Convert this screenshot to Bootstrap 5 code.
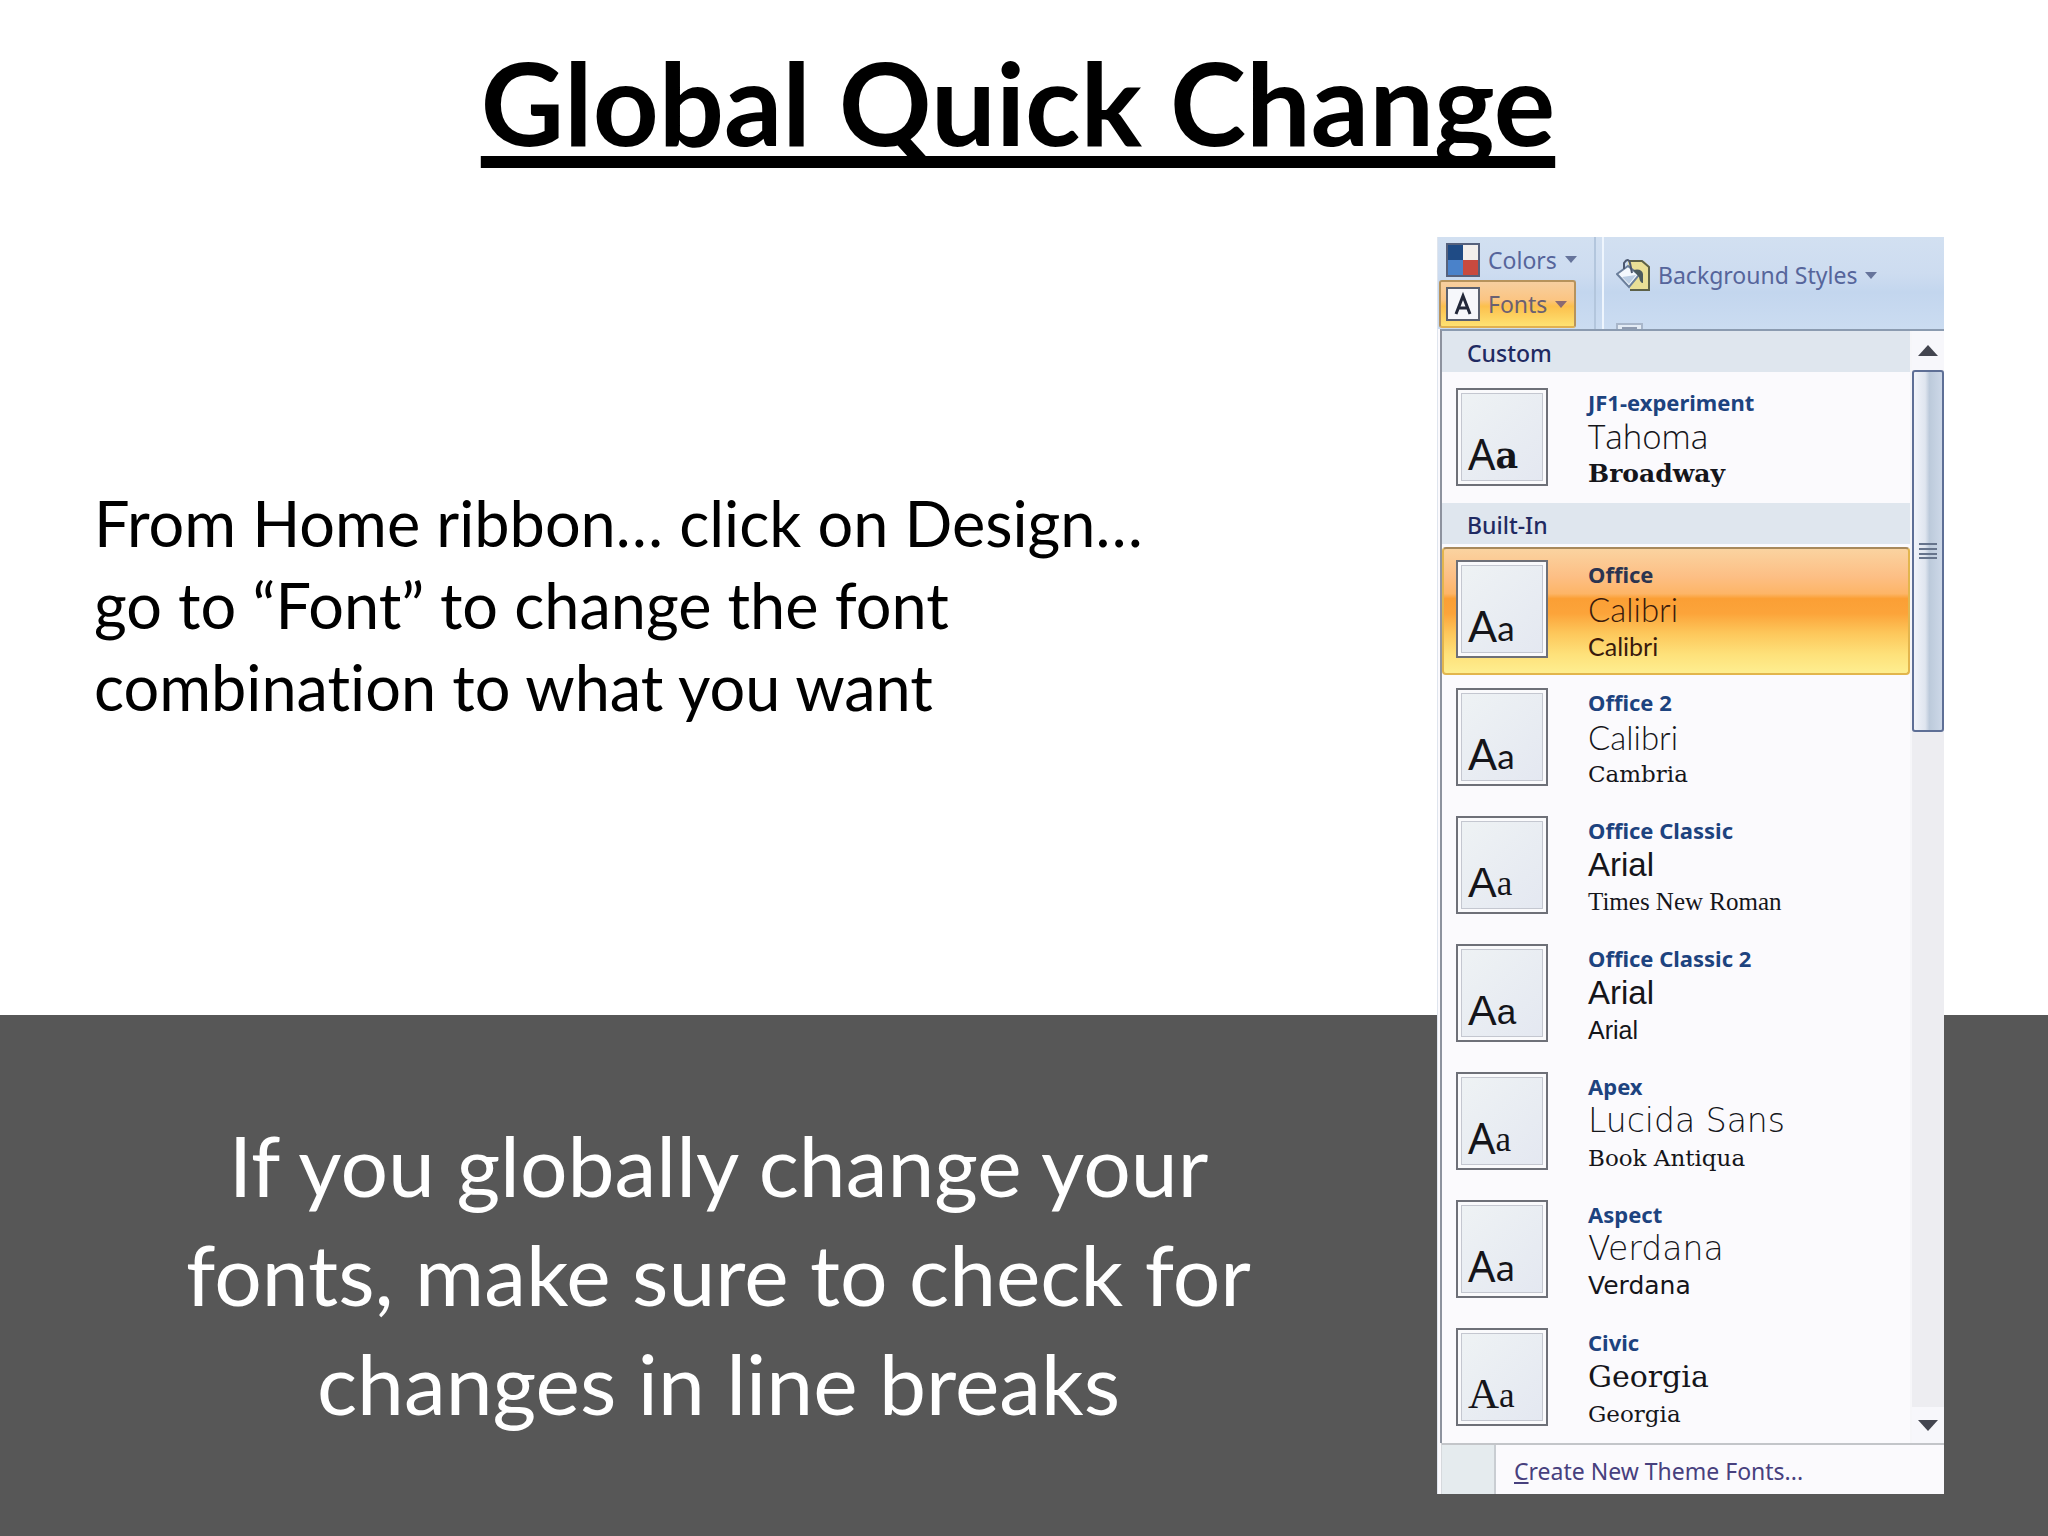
<!DOCTYPE html>
<html lang="en">
<head>
<meta charset="utf-8">
<meta name="viewport" content="width=device-width, initial-scale=1">
<title>Global Quick Change</title>
<link href="https://cdn.jsdelivr.net/npm/bootstrap@5.3.0/dist/css/bootstrap.min.css" rel="stylesheet">
<style>
  body { font-family: Lato, "Liberation Sans", sans-serif; color: #000; background: #fff; font-variant-ligatures: none; }
  .slide { display: grid; min-height: 100vh; grid-template-columns: minmax(0, 1fr) auto; grid-template-rows: 237px 1fr auto; }
  .slide-head { grid-area: 1 / 1 / 2 / 3; padding: 33px 12px 0 0; }
  .slide-title { font-size: 115px; line-height: 136px; font-weight: 700; text-decoration: underline; text-decoration-thickness: 12px; text-underline-offset: 10px; text-decoration-skip-ink: none; }
  .steps { grid-area: 2 / 1 / 3 / 2; padding: 245px 240px 0 94px; font-size: 63px; line-height: 82px; }
  .band { grid-area: 3 / 1 / 4 / 3; background: #575757; min-height: 521px; }
  .notice { grid-area: 3 / 1 / 4 / 2; padding: 95px 160px 0; color: #fff; font-size: 84px; line-height: 109px; }
  .picker { grid-area: 2 / 2 / 4 / 3; width: 507px; margin: 0 104px 42px 0; font-family: "Noto Sans", sans-serif; background: #fbfafd; border-left: 1px solid #dfe5ee; }

  .ribbon { height: 92px; background: linear-gradient(#d2e0f1, #cddcf0 40%, #c3d6ee 60%, #cbdcf1); font-size: 23px; line-height: 28px; color: #56659b; }
  .ribbon-left { width: 158px; border-right: 2px solid #b3c6dd; padding: 2px 0 0 1px; }
  .ribbon-right { border-left: 2px solid #eef5fd; margin-left: 6px; padding: 22px 0 0 12px; }
  .tool { border: 0; background: none; color: inherit; padding: 0; }
  .tool-colors { height: 41px; padding-left: 7px; }
  .tool-fonts { width: 137px; height: 48px; padding-left: 5px; border: 2px solid #b7935b; border-bottom-color: #e0b050; border-radius: 3px; background: linear-gradient(#f7cf9f, #fbc583 40%, #fcc04d 55%, #fee272); color: #6a6072; }
  .tool svg { display: block; }

  .menu-list { border-top: 2px solid #8b9bb0; border-left: 2px solid #8d929e; margin-left: 2px; }
  .group-head { height: 44px; border-bottom: 3px solid #fbfafd; background: #dfe6ee; color: #1f2a62; font-size: 23px; line-height: 44px; font-weight: 500; padding-left: 25px; margin: 0; }
  .font-item { width: 100%; height: 128px; border: 2px solid transparent; border-radius: 4px; background: none; padding: 11px 0 0 12px; gap: 40px; color: #15151a; }
  .font-item.chosen { border-color: #e2b54d; border-top-color: #a8895b; background: linear-gradient(#fad3a0, #fdbf85 22%, #fdb567 36%, #fb9f35 40%, #fca43a 52%, #fdc75b 68%, #fee17a 85%, #feee90); color: #3a1a0c; }
  .font-item.chosen .item-name { color: #2b3450; }
  .thumb { width: 92px; height: 98px; border: 2px solid #6e7078; padding: 3px; background: #fafafc; }
  .thumb-in { height: 100%; border: 1px solid #c4c7d0; background: linear-gradient(135deg, #eef2f4, #e4e8f1); padding: 0 0 5px 6px; color: #15151a; }
  .big-a { font-size: 43px; line-height: 42px; }
  .small-a { font-size: 35px; line-height: 39px; }
  .item-name { font-size: 22px; line-height: 29px; font-weight: 700; color: #1d437f; }
  .head-font { font-size: 33px; line-height: 40px; font-weight: 300; }
  .body-font { font-size: 25px; line-height: 34px; }
  .f-sans { font-family: "Liberation Sans", sans-serif; }
  .f-serif { font-family: "Liberation Serif", serif; }
  .f-lato { font-family: Lato, sans-serif; }
  .f-noto { font-family: "Noto Sans", sans-serif; }
  .f-open { font-family: "Open Sans", sans-serif; }
  .f-wide { font-family: "DejaVu Sans", sans-serif; }
  .f-slab { font-family: "DejaVu Serif", serif; }
  .f-heavy { font-family: "DejaVu Serif", serif; font-weight: 700; }
  .t-23 { font-size: 23px; }
  .t-30 { font-size: 30px; }

  .scroller { width: 34px; background: #ededf1; border-left: 2px solid #f6f6f9; }
  .scroll-btn { border: 0; padding: 0; height: 39px; background: #f7f7fb; }
  .scroll-btn.down { height: 36px; }
  .scroll-thumb { height: 362px; border: 2px solid #5e6f96; border-radius: 3px; background: linear-gradient(90deg, #f1f4fa, #dfe5ef 40%, #bccadb 55%, #cdd8e8); }
  .menu-foot { height: 51px; margin-left: 3px; border-top: 2px solid #c3c5c9; border-left: 1px solid #d6d9dd; }
  .foot-gutter { width: 54px; background: #e5ebee; border-right: 2px solid #c9cdd2; }
  .foot-link { border: 0; background: none; font-size: 23px; line-height: 28px; color: #47407e; padding: 2px 0 0 18px; }
</style>
</head>
<body>
<main class="slide">
  <header class="slide-head text-center">
    <h1 class="slide-title mb-0">Global Quick Change</h1>
  </header>

  <p class="steps mb-0">From Home ribbon… click on Design…<br>go to “Font” to change the font<br>combination to what you want</p>

  <div class="band"></div>
  <p class="notice mb-0 text-center">If you globally change your<br>fonts, make sure to check for<br>changes in line breaks</p>

  <section class="picker d-flex flex-column" aria-label="Theme fonts">
    <div class="ribbon d-flex">
      <div class="ribbon-left d-flex flex-column align-items-start">
        <button type="button" class="tool tool-colors d-flex align-items-center gap-2">
          <svg width="34" height="34" viewBox="0 0 34 34"><path fill="#1f4b85" d="M0 0h17v17H0z"/><path fill="#f3efec" d="M17 0h17v17H17z"/><path fill="#4a82ca" d="M0 17h17v17H0z"/><path fill="#c84a3f" d="M17 17h17v17H17z"/><path fill="none" stroke="#56617c" stroke-width="2" d="M1 1h32v32H1z"/></svg>
          <span>Colors</span>
          <svg width="12" height="7" viewBox="0 0 12 7"><path fill="#66749b" d="M0 0h12L6 7z"/></svg>
        </button>
        <button type="button" class="tool tool-fonts d-flex align-items-center gap-2">
          <svg width="34" height="34" viewBox="0 0 34 34"><path fill="#f6f7fb" stroke="#5b6170" stroke-width="2" d="M1 1h32v32H1z"/><path fill="none" stroke="#22283a" stroke-width="3" d="M10 27L17 9l7 18M13 21h8"/></svg>
          <span>Fonts</span>
          <svg width="12" height="7" viewBox="0 0 12 7"><path fill="#8a6a72" d="M0 0h12L6 7z"/></svg>
        </button>
      </div>
      <div class="ribbon-right flex-grow-1 d-flex flex-column justify-content-between align-items-start">
        <button type="button" class="tool d-flex align-items-center gap-2">
          <svg width="34" height="32" viewBox="0 0 34 32"><path fill="#e9df96" d="M12 2h16l5 5v24H14z"/><path fill="none" stroke="#5c6149" stroke-width="2" d="M13 2h13l7 6v23H14"/><path fill="#f3f8fd" stroke="#6b7f9b" stroke-width="2" d="M1 15L12 7l11 9-10 12z"/><path fill="#b9cce2" d="M6 18l14-2-7 9z"/><path fill="none" stroke="#4c5870" stroke-width="2" d="M8 10V4q4-6 6 0l2 10"/><path fill="#4b5a5e" d="M17 11q9-2 10 4v9q-3 0-4-6z"/></svg>
          <span>Background Styles</span>
          <svg width="12" height="7" viewBox="0 0 12 7"><path fill="#66749b" d="M0 0h12L6 7z"/></svg>
        </button>
        <svg width="28" height="6" viewBox="0 0 28 6"><path fill="#e3ebf4" stroke="#a8b6ca" stroke-width="2" d="M1 7V1h25v6"/><path stroke="#8f9bb0" stroke-width="2" d="M6 5h15"/></svg>
      </div>
    </div>

    <div class="menu-list d-flex">
      <div class="flex-grow-1">
        <h2 class="group-head">Custom</h2>
        <button type="button" class="font-item d-flex text-start">
          <span class="thumb d-block"><span class="thumb-in d-flex align-items-end"><span class="big-a f-noto">A</span><span class="small-a f-heavy">a</span></span></span>
          <span class="d-flex flex-column"><span class="item-name">JF1-experiment</span><span class="head-font f-open">Tahoma</span><span class="body-font f-heavy">Broadway</span></span>
        </button>
        <h2 class="group-head">Built-In</h2>
        <button type="button" class="font-item chosen d-flex text-start" aria-pressed="true">
          <span class="thumb d-block"><span class="thumb-in d-flex align-items-end"><span class="big-a f-lato">A</span><span class="small-a f-lato">a</span></span></span>
          <span class="d-flex flex-column"><span class="item-name">Office</span><span class="head-font f-lato">Calibri</span><span class="body-font f-lato">Calibri</span></span>
        </button>
        <button type="button" class="font-item d-flex text-start">
          <span class="thumb d-block"><span class="thumb-in d-flex align-items-end"><span class="big-a f-lato">A</span><span class="small-a f-lato">a</span></span></span>
          <span class="d-flex flex-column"><span class="item-name">Office 2</span><span class="head-font f-lato">Calibri</span><span class="body-font f-slab t-23">Cambria</span></span>
        </button>
        <button type="button" class="font-item d-flex text-start">
          <span class="thumb d-block"><span class="thumb-in d-flex align-items-end"><span class="big-a f-sans">A</span><span class="small-a f-serif">a</span></span></span>
          <span class="d-flex flex-column"><span class="item-name">Office Classic</span><span class="head-font f-sans">Arial</span><span class="body-font f-serif">Times New Roman</span></span>
        </button>
        <button type="button" class="font-item d-flex text-start">
          <span class="thumb d-block"><span class="thumb-in d-flex align-items-end"><span class="big-a f-sans">A</span><span class="small-a f-sans">a</span></span></span>
          <span class="d-flex flex-column"><span class="item-name">Office Classic 2</span><span class="head-font f-sans">Arial</span><span class="body-font f-sans">Arial</span></span>
        </button>
        <button type="button" class="font-item d-flex text-start">
          <span class="thumb d-block"><span class="thumb-in d-flex align-items-end"><span class="big-a f-noto">A</span><span class="small-a f-serif">a</span></span></span>
          <span class="d-flex flex-column"><span class="item-name">Apex</span><span class="head-font f-wide">Lucida Sans</span><span class="body-font f-slab t-23">Book Antiqua</span></span>
        </button>
        <button type="button" class="font-item d-flex text-start">
          <span class="thumb d-block"><span class="thumb-in d-flex align-items-end"><span class="big-a f-noto">A</span><span class="small-a f-noto">a</span></span></span>
          <span class="d-flex flex-column"><span class="item-name">Aspect</span><span class="head-font f-wide">Verdana</span><span class="body-font f-wide">Verdana</span></span>
        </button>
        <button type="button" class="font-item d-flex text-start">
          <span class="thumb d-block"><span class="thumb-in d-flex align-items-end"><span class="big-a f-serif">A</span><span class="small-a f-serif">a</span></span></span>
          <span class="d-flex flex-column"><span class="item-name">Civic</span><span class="head-font f-slab t-30">Georgia</span><span class="body-font f-slab t-23">Georgia</span></span>
        </button>
      </div>
      <div class="scroller d-flex flex-column">
        <button type="button" class="scroll-btn d-flex align-items-center justify-content-center" aria-label="Scroll up"><svg width="20" height="11" viewBox="0 0 20 11"><path fill="#43454f" d="M0 11h20L10 0z"/></svg></button>
        <div class="scroll-thumb d-flex align-items-center justify-content-center"><svg width="18" height="16" viewBox="0 0 18 16"><path stroke="#66748c" stroke-width="2" d="M0 1h18M0 6h18M0 11h18M0 15h18"/></svg></div>
        <button type="button" class="scroll-btn down mt-auto d-flex align-items-center justify-content-center" aria-label="Scroll down"><svg width="20" height="11" viewBox="0 0 20 11"><path fill="#43454f" d="M0 0h20L10 11z"/></svg></button>
      </div>
    </div>

    <div class="menu-foot d-flex">
      <div class="foot-gutter"></div>
      <button type="button" class="foot-link"><u>C</u>reate New Theme Fonts...</button>
    </div>
  </section>
</main>
<script src="https://cdn.jsdelivr.net/npm/bootstrap@5.3.0/dist/js/bootstrap.bundle.min.js"></script>
</body>
</html>
